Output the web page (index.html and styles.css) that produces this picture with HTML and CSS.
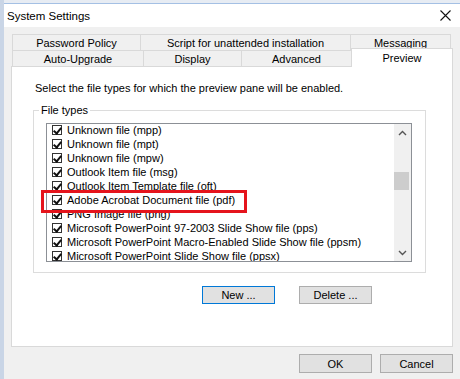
FILE: index.html
```html
<!DOCTYPE html>
<html>
<head>
<meta charset="utf-8">
<link rel="stylesheet" href="styles.css">
</head>
<body>
<div class="screen">
  <div class="desk-edge"></div>
  <div class="window-wrap">
    <div class="window">
      <div class="titlebar">
        <span class="title">System Settings</span>
        <svg class="close" width="11" height="11" viewBox="0 0 11 11"><path d="M0.5 0.5 L10.5 10.5 M10.5 0.5 L0.5 10.5" stroke="#111" stroke-width="1.1" fill="none"/></svg>
      </div>
      <div class="body">
        <div class="tabs">
          <div class="tab-row">
            <div class="tab w-pp">Password Policy</div>
            <div class="tab w-script">Script for unattended installation</div>
            <div class="tab w-msg">Messaging</div>
          </div>
          <div class="tab-row row2">
            <div class="tab w-auto">Auto-Upgrade</div>
            <div class="tab w-disp">Display</div>
            <div class="tab w-adv">Advanced</div>
            <div class="tab w-prev selected">Preview</div>
          </div>
        </div>
        <div class="panel">
          <p class="intro">Select the file types for which the preview pane will be enabled.</p>
          <fieldset class="group">
            <legend>File types</legend>
            <div class="listbox">
              <div class="items">
                <div class="item"><span class="cb"></span>Unknown file (mpp)</div>
                <div class="item"><span class="cb"></span>Unknown file (mpt)</div>
                <div class="item"><span class="cb"></span>Unknown file (mpw)</div>
                <div class="item"><span class="cb"></span>Outlook Item file (msg)</div>
                <div class="item"><span class="cb"></span>Outlook Item Template file (oft)</div>
                <div class="item"><span class="cb"></span>Adobe Acrobat Document file (pdf)</div>
                <div class="item"><span class="cb"></span>PNG Image file (png)</div>
                <div class="item"><span class="cb"></span>Microsoft PowerPoint 97-2003 Slide Show file (pps)</div>
                <div class="item"><span class="cb"></span>Microsoft PowerPoint Macro-Enabled Slide Show file (ppsm)</div>
                <div class="item"><span class="cb"></span>Microsoft PowerPoint Slide Show file (ppsx)</div>
              </div>
              <div class="scrollbar">
                <div class="sb-btn"><svg width="9" height="6" viewBox="0 0 9 6"><path d="M1 5 L4.5 1.5 L8 5" stroke="#555" stroke-width="1.4" fill="none"/></svg></div>
                <div class="sb-track"><div class="sb-thumb"></div></div>
                <div class="sb-btn"><svg width="9" height="6" viewBox="0 0 9 6"><path d="M1 1 L4.5 4.5 L8 1" stroke="#555" stroke-width="1.4" fill="none"/></svg></div>
              </div>
            </div>
          </fieldset>
          <div class="btn-row">
            <button class="btn focused">New ...</button>
            <button class="btn">Delete ...</button>
          </div>
        </div>
        <div class="footer">
          <button class="btn btn-lg">OK</button>
          <button class="btn btn-lg">Cancel</button>
        </div>
      </div>
    </div>
  </div>
  <div class="highlight"></div>
</div>
</body>
</html>
```
FILE: styles.css
```css
* { box-sizing: border-box; }
html, body { margin: 0; padding: 0; }
body {
  font-family: "Liberation Sans", Arial, sans-serif;
  font-size: 11px;
  color: #000;
  background: #f0f0f0;
}
.screen {
  position: relative;
  display: flex;
  width: 460px;
  height: 379px;
  overflow: hidden;
}
.desk-edge {
  width: 4px;
  background: #c9d5e6;
}
.window-wrap {
  flex: 1;
  padding-top: 3px;
  background: #e7ecf3;
  display: flex;
  flex-direction: column;
}
.window {
  flex: 1;
  border-top: 1px solid #a4c0e4;
  background: #f0f0f0;
  display: flex;
  flex-direction: column;
}
.titlebar {
  height: 23px;
  background: #fff;
  display: flex;
  align-items: center;
  justify-content: space-between;
  padding: 0 9px 0 3px;
}
.title {
  font-size: 11.5px;
  line-height: 14px;
  color: #000;
}
.close { display: block; }
.body {
  padding: 7px 7px 0 7px;
  display: flex;
  flex-direction: column;
}
.tabs { margin-left: 1px; }
.tab-row {
  display: flex;
  height: 16px;
  align-items: flex-end;
}
.tab {
  height: 16px;
  border: 1px solid #d9d9d9;
  border-bottom: none;
  background: #f0f0f0;
  display: flex;
  align-items: center;
  justify-content: center;
  line-height: 14px;
  white-space: nowrap;
  margin-right: -1px;
}
.w-pp { width: 129px; }
.w-script { width: 211px; }
.w-msg { width: 101px; }
.w-auto { width: 132px; }
.w-disp { width: 99px; }
.w-adv { width: 111px; }
.w-prev { width: 102px; }
.tab.selected {
  position: relative;
  z-index: 1;
  height: 19px;
  margin-bottom: -1px;
  background: #fff;
  align-items: flex-start;
  padding-top: 2px;
}
.panel {
  width: 442px;
  height: 281px;
  background: #fff;
  border: 1px solid #d9d9d9;
  padding: 14px 0 0 23px;
}
.intro {
  margin: 0;
  line-height: 14px;
  white-space: nowrap;
}
.group {
  margin: 8px 0 0 -2px;
  width: 393px;
  border: 1px solid #dcdcdc;
  padding: 0 0 10px 0;
  min-width: 0;
}
.group legend {
  margin-left: 5px;
  padding: 0 2px;
  line-height: 14px;
}
.listbox {
  margin: 6px 0 0 12px;
  width: 366px;
  height: 139px;
  border: 1px solid #8c9096;
  display: flex;
  background: #fff;
}
.items {
  flex: 1;
  overflow: hidden;
}
.item {
  height: 14px;
  display: flex;
  align-items: center;
  padding-left: 5px;
  white-space: nowrap;
  line-height: 14px;
}
.item:first-child { margin-top: -1px; }
.cb {
  position: relative;
  flex: none;
  width: 10px;
  height: 10px;
  border: 1px solid #333;
  background: #fff;
  margin-right: 5px;
}
.cb::after {
  content: "";
  position: absolute;
  left: 2px;
  top: 0;
  width: 3px;
  height: 6px;
  border-right: 2px solid #111;
  border-bottom: 2px solid #111;
  transform: rotate(40deg);
}
.scrollbar {
  width: 17px;
  background: #f0f0f0;
  display: flex;
  flex-direction: column;
}
.sb-btn {
  height: 17px;
  display: flex;
  align-items: center;
  justify-content: center;
}
.sb-btn svg { display: block; }
.sb-track { flex: 1; }
.sb-thumb {
  margin: 31px 2px 0 0;
  height: 18px;
  background: #cdcdcd;
}
.btn {
  font-family: "Liberation Sans", Arial, sans-serif;
  font-size: 11px;
  color: #000;
  width: 73px;
  height: 18px;
  padding: 0;
  background: #e1e1e1;
  border: 1px solid #adadad;
  border-radius: 0;
  line-height: 14px;
}
.btn.focused { border-color: #0078d7; }
.btn-row {
  display: flex;
  gap: 24px;
  margin: 13px 0 0 167px;
}
.footer {
  display: flex;
  justify-content: flex-end;
  gap: 8px;
  margin-top: 7px;
}
.btn-lg { height: 19px; }
.highlight {
  position: absolute;
  left: 41px;
  top: 190px;
  width: 206px;
  height: 23px;
  border: 3px solid #e5141c;
  pointer-events: none;
}
```
